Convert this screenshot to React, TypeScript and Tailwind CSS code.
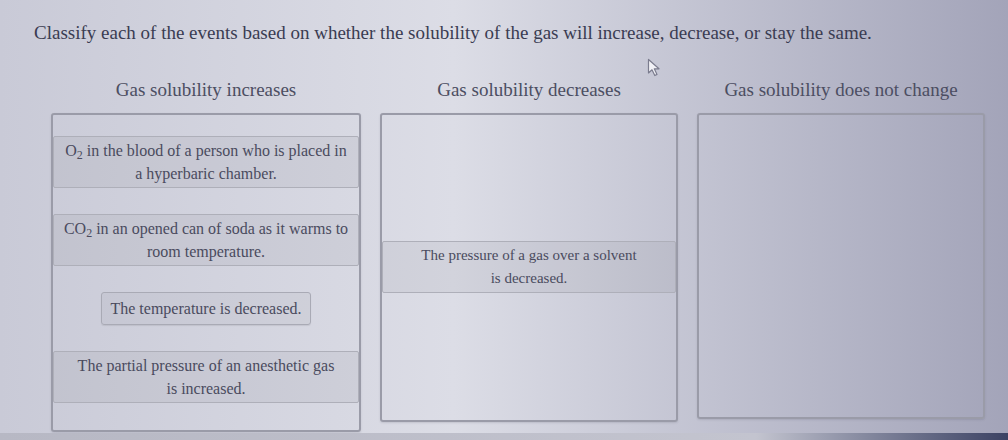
import type { ReactNode } from "react";

type Item = { id: string; content: ReactNode; compact?: boolean };

const columns: {
  title: string;
  width: string;
  height: string;
  pad: string;
  text: string;
  items: Item[];
}[] = [
  {
    title: "Gas solubility increases",
    width: "w-[310px]",
    height: "h-[319px]",
    pad: "pt-[21px]",
    text: "text-[16px]",
    items: [
      {
        id: "o2",
        content: (
          <>
            O<sub>2</sub> in the blood of a person who is placed in
            <br />a hyperbaric chamber.
          </>
        ),
      },
      {
        id: "co2",
        content: (
          <>
            CO<sub>2</sub> in an opened can of soda as it warms to
            <br />
            room temperature.
          </>
        ),
      },
      { id: "temp", content: "The temperature is decreased.", compact: true },
      {
        id: "partial",
        content: (
          <>
            The partial pressure of an anesthetic gas
            <br />
            is increased.
          </>
        ),
      },
    ],
  },
  {
    title: "Gas solubility decreases",
    width: "w-[298px]",
    height: "h-[309px]",
    pad: "pt-[126px]",
    text: "text-[15px]",
    items: [
      {
        id: "pressure",
        content: (
          <>
            The pressure of a gas over a solvent
            <br />
            is decreased.
          </>
        ),
      },
    ],
  },
  {
    title: "Gas solubility does not change",
    width: "w-[288px]",
    height: "h-[306px]",
    pad: "pt-[20px]",
    text: "text-[15px]",
    items: [],
  },
];

function Card({ item }: { item: Item }) {
  if (item.compact) {
    return (
      <div className="self-center w-[210px] rounded-[3px] border border-[#a9aab5] bg-black/[0.03] py-[4px] text-center leading-[23px] shadow-[0_1px_1px_rgba(0,0,0,0.08)]">
        {item.content}
      </div>
    );
  }
  return (
    <div className="rounded-[2px] border border-[#aeafb9] bg-black/[0.045] py-[2px] text-center leading-[23px]">
      {item.content}
    </div>
  );
}

function Cursor() {
  return (
    <svg
      className="absolute left-[647px] top-[58px]"
      width="16"
      height="20"
      viewBox="0 0 16 20"
      fill="none"
    >
      <path
        d="M1.5 1.5 L1.5 15 L5 11.8 L7.8 17.5 L10 16.4 L7.3 10.8 L12 10.8 Z"
        fill="#f1f1f6"
        stroke="#7b7c8e"
        strokeWidth="1.2"
        strokeLinejoin="round"
      />
    </svg>
  );
}

export default function App() {
  return (
    <div className="relative flex h-[440px] w-[1008px] flex-col overflow-hidden bg-linear-to-r from-[#c9cad7] via-[#dcdde6] via-45% to-[#a3a4b9] font-['Liberation_Serif',serif] text-[#4a4b5e]">
      <h1 className="pl-[34px] pt-[21px] text-[19px] leading-[24px] text-[#3a3c52]">
        Classify each of the events based on whether the solubility of the gas will increase,
        decrease, or stay the same.
      </h1>

      <div className="ml-[51px] mt-[33px] flex gap-[19px]">
        {columns.map((col) => (
          <div key={col.title} className={`flex flex-col ${col.width}`}>
            <h2 className="mb-[11px] text-center text-[19px] leading-[24px] text-[#4c4e62]">
              {col.title}
            </h2>
            <div
              className={`flex flex-col gap-[26px] rounded-[3px] border-2 border-[#9a9ba8] ${col.height} ${col.pad} ${col.text} shadow-[0_1px_2px_rgba(60,60,80,0.15)]`}
            >
              {col.items.map((item) => (
                <Card key={item.id} item={item} />
              ))}
            </div>
          </div>
        ))}
      </div>

      <div className="mt-auto h-[7px] bg-linear-to-r from-[#b7b8c4] via-[#c3c4cf] via-75% to-[#3c4263]" />

      <Cursor />
    </div>
  );
}
